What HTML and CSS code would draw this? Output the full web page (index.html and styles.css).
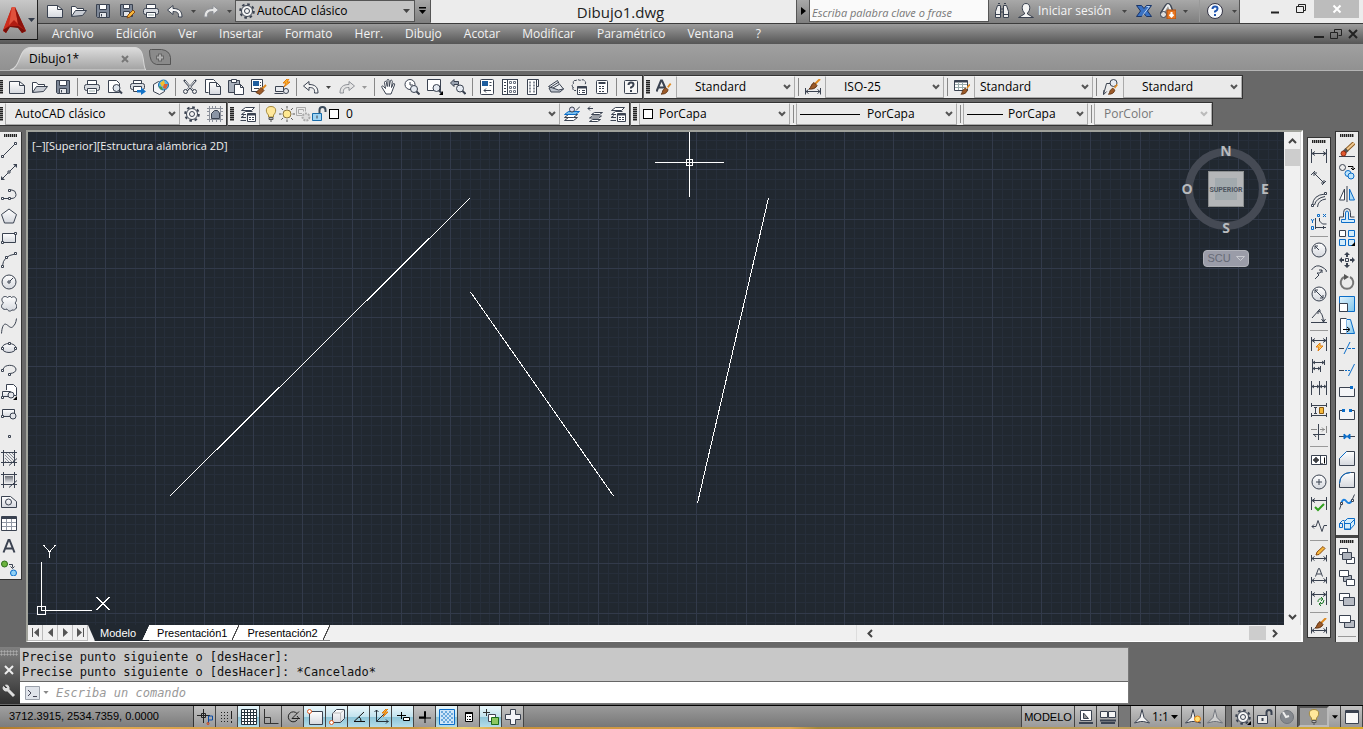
FILE: index.html
```html
<!DOCTYPE html>
<html lang="es">
<head>
<meta charset="utf-8">
<title>Dibujo1.dwg</title>
<link rel="stylesheet" href="styles.css">
</head>
<body>
<svg class="sprite" aria-hidden="true">
  <defs>
    <linearGradient id="g-page" x1="0" y1="0" x2="0" y2="1"><stop offset="0" stop-color="#fff"/><stop offset="1" stop-color="#d5d8de"/></linearGradient>
    <linearGradient id="g-blue" x1="0" y1="0" x2="1" y2="1"><stop offset="0" stop-color="#e4f4fd"/><stop offset="1" stop-color="#7fc4ea"/></linearGradient>
    <linearGradient id="g-dark" x1="0" y1="0" x2="0" y2="1"><stop offset="0" stop-color="#6c7078"/><stop offset="1" stop-color="#e8e9ec"/></linearGradient>
    <linearGradient id="g-tab" x1="0" y1="0" x2="0" y2="1"><stop offset="0" stop-color="#dcdcdc"/><stop offset="1" stop-color="#a2a2a2"/></linearGradient>
  </defs>
  <symbol id="brush" viewBox="0 0 16 16"><path d="M14.500 3l-4 5" stroke="#e08a20" stroke-width="2"/><path d="M11 7l-2 2" stroke="#eee" stroke-width="2"/><path d="M9 7.500l2.500 2.500c-1 4-4 5-8 5 2-1 1-3 2.500-5z" fill="#9c5a28" stroke="#5f3212"/></symbol>
  <symbol id="caret" viewBox="0 0 7 4"><path d="M0 0h7l-3.500 4z" fill="currentColor" stroke="none"/></symbol>
  <symbol id="new" viewBox="0 0 16 16"><path d="M.5 2.500h10l5 4v8h-15z" fill="url(#g-page)"/><path d="M10.500 2.500v4h5"/></symbol>
  <symbol id="open" viewBox="0 0 16 16"><path d="M.5 13.500v-10h4l1.500 2h6.500v2" fill="#fff"/><path d="M.5 13.500l4-6h11l-4 5z" fill="#c9cdd4"/></symbol>
  <symbol id="save" viewBox="0 0 16 16"><path d="M1.500 1.500h13v13h-12l-1-1z" fill="#7d8797"/><path d="M4.500 1.500h7v5h-7z" fill="#fff"/><path d="M4.500 9.500h7v5h-7z" fill="#e4e6ea"/><path d="M6.500 11v2.500"/></symbol>
  <symbol id="saveas" viewBox="0 0 16 16"><path d="M1.500 1.500h12v12h-11l-1-1z" fill="#7d8797"/><path d="M4.500 1.500h6v4h-6z" fill="#fff"/><path d="M4.500 8.500h6v5h-6z" fill="#e4e6ea"/><path d="M8 15l1-3 5-5 2 2-5 5z" fill="#f6b73c" stroke="#8a4a10"/></symbol>
  <symbol id="print" viewBox="0 0 16 16"><path d="M3.500 5.500v-4h9v4" fill="#fff"/><rect x="0.500" y="5.500" width="15" height="6" rx="2" fill="#d9dce1"/><path d="M3.500 9.500h9v5h-9z" fill="#fff"/><path d="M5 12h6" stroke="#9aa"/></symbol>
  <symbol id="preview" viewBox="0 0 16 16"><path d="M1.500 1.500h8l3 3v9h-11z" fill="#fff"/><circle cx="9.500" cy="9" r="3.500" fill="#dfe6ee"/><path d="M12 11.500l3 3" stroke-width="2"/></symbol>
  <symbol id="publish" viewBox="0 0 16 16"><path d="M3.500 4.500v-3h8v3" fill="#fff"/><rect x="0.500" y="4.500" width="14" height="6" rx="2" fill="#d9dce1"/><path d="M3.500 7.500h8v5h-8z" fill="#fff"/><path d="M7 11h4V8.500l5 4-5 3.500V13.500H7z" fill="#1473c8" stroke="none"/></symbol>
  <symbol id="globe" viewBox="0 0 16 16"><path d="M.5 5.500l5-3 6 3v7l-5 3-6-3z" fill="#f4f5f7"/><circle cx="10.500" cy="6" r="5" fill="#5bb4e6" stroke="#1d6ea8"/><path d="M7 4l4-3 1 4-3 3z" fill="#f0c030" stroke="none"/><path d="M11 5l4 0-2 5-3-1z" fill="#e06030" stroke="none"/><path d="M6 7l3 1 1 3-3-1z" fill="#4aa040" stroke="none"/></symbol>
  <symbol id="cut" viewBox="0 0 16 16"><path d="M2 1l9 10.500M14 1L5 11.500" stroke-width="2"/><path d="M3 2l8 9M13 2l-8 9" stroke="#eee"/><circle cx="3.500" cy="12.500" r="2"/><circle cx="12.500" cy="12.500" r="2"/></symbol>
  <symbol id="copy" viewBox="0 0 16 16"><path d="M3.500 13.500h-3v-13h8l2 2" fill="#fff"/><path d="M4.500 3.500h7l4 4v8h-11z" fill="url(#g-page)"/><path d="M11.500 3.500v4h4"/></symbol>
  <symbol id="paste" viewBox="0 0 16 16"><path d="M0.500 1.500h11v12h-11z" fill="#a9b0bb"/><path d="M3.500 0.500h5v3h-5z" fill="#fff"/><path d="M6.500 5.500h6l3 3v7h-9z" fill="#fff"/><path d="M12.500 5.500v3h3"/></symbol>
  <symbol id="match" viewBox="0 0 16 16"><path d="M.5 0.500h11v12h-11z" fill="#fff"/><path d="M2 2h6v5h-6z" fill="#1f5e9e" stroke="none"/><path d="M3 9.500h5M9.500 3v1M9.500 6v1"/><path d="M15 6l-4 4" stroke="#e08a20" stroke-width="2"/><path d="M10 8.500l3 3-4 4-4-2z" fill="#9c5a28" stroke="#6a3a14"/></symbol>
  <symbol id="bedit" viewBox="0 0 16 16"><path d="M1.500 7.500h8v5h-8z" fill="#e8eaee"/><circle cx="12" cy="12" r="2.500" fill="#e8eaee"/><path d="M0.500 14.500h9"/><path d="M13 0l-4 4h3l-2 4 6-5h-3l2-3z" fill="#ffb428" stroke="#e07a10"/></symbol>
  <symbol id="undo" viewBox="0 0 16 16"><path d="M6 2.500l-5.500 4.500 5.500 4.500v-3c4 0 6 1 5.500 5.500h3.500c0-6-3-8.500-9-8.500z" fill="#f4f4f4"/></symbol>
  <symbol id="redo" viewBox="0 0 16 16"><path d="M10 2.500l5.500 4.500-5.500 4.500v-3c-4 0-6 1-5.500 5.500h-3.500c0-6 3-8.500 9-8.500z" fill="#e4e4e4" stroke="#8d9096"/></symbol>
  <symbol id="pan" viewBox="0 0 16 16"><path d="M5 15l-4-6.500c-1-2 1-2 2-.5l1.500 1.500-1-6c0-1.500 1.500-1.500 2 0l.8 4-.3-6c.2-1.500 2-1.500 2 0l.3 6 1-5.500c.5-1.500 2-1 2 .5l-.8 6 1.500-3.500c1-1 2-.5 1.500 1l-2.500 6.500-1 2.500z" fill="#fff"/></symbol>
  <symbol id="zoom" viewBox="0 0 16 16"><circle cx="6" cy="5.500" r="5" fill="#fff"/><path d="M6 3v3h3"/><circle cx="10" cy="10" r="3.500" fill="#e6ebf2"/><path d="M12.500 12.500l3 3" stroke-width="2"/></symbol>
  <symbol id="zoomw" viewBox="0 0 16 16"><path d="M0.500 0.500h13v11h-13z" fill="#fff"/><circle cx="9.500" cy="9" r="3.500" fill="#e6ebf2"/><path d="M12 11.500l2.500 2.500" stroke-width="2"/><path d="M16 12v4h-4z" fill="#000" stroke="none"/></symbol>
  <symbol id="zoomp" viewBox="0 0 16 16"><path d="M4 .5L0.500 4 4 7.500V5.500h4.500V2.500H4z" fill="#9aa3b0"/><circle cx="10" cy="9.500" r="3.500" fill="#e6ebf2"/><path d="M12.500 12l3 3" stroke-width="2"/></symbol>
  <symbol id="props" viewBox="0 0 16 16"><rect x="1.500" y="0.500" width="13" height="15" rx="1" fill="#fff"/><path d="M3 2h6v5h-6z" fill="#1f5e9e" stroke="none"/><path d="M10.500 3.500h2M10.500 6.500h2M5 11.500h7M7 9.500l-2 2 2 2"/></symbol>
  <symbol id="dcenter" viewBox="0 0 16 16"><rect x="0.500" y="0.500" width="15" height="15" fill="#fff"/><path d="M5.500 0.500v15M2 3.500h2M2 6.500h2M2 9.500h2M2 12.500h2"/><path d="M7.500 2.500h2v2h-2zM11.500 2.500h2v2h-2zM7.500 7.500h2v2h-2zM11.500 7.500h2v2h-2zM7.500 11.500h2v2h-2zM11.500 11.500h2v2h-2z" stroke="#6a7280"/></symbol>
  <symbol id="palette" viewBox="0 0 16 16"><path d="M2.500 0.500h11v7h-2v8h-9z" fill="#fff"/><path d="M11.500 0.500v7"/><path d="M4 3.500h2M8 3.500h2M4 6.500h2M8 6.500h2M4 9.500h2M8 9.500h2M4 12.500h2M8 12.500h2" stroke="#8a909a" stroke-width="2"/></symbol>
  <symbol id="sheet" viewBox="0 0 16 16"><path d="M1 9l2 4h9l3.500-3-11-2z" fill="#bfc5ce"/><path d="M0.500 7.500l9-6 1.500 3 4.500 5.500-5 1z" fill="#eef0f3"/><path d="M3 8l7-4.500M5 9l6-3.500"/></symbol>
  <symbol id="markup" viewBox="0 0 16 16"><path d="M2.500 8.500q-3-2 0-4-1-3.500 2.500-3 2.500-1.500 4 0 3-1.500 4.500 0 2 2 .5 4M2 8q-1 4 3 3.500" stroke-dasharray="3 1"/><path d="M6.500 7.500h9v8h-9z" fill="#fff"/><path d="M6.500 8.500h9" stroke-width="2"/><path d="M8 11.500h1M11 11.500h3M8 13.500h1M11 13.500h3"/></symbol>
  <symbol id="calc" viewBox="0 0 16 16"><rect x="2.500" y="1.500" width="11" height="13" rx="1" fill="#fff"/><path d="M4.500 4h7" stroke-width="2"/><path d="M5 7.500h6M5 9.500h6M5 12.500h6" stroke-dasharray="2 1"/></symbol>
  <symbol id="help" viewBox="0 0 16 16"><rect x="1.500" y="1.500" width="13" height="13" rx="1" fill="#f7f7f7"/><path d="M5.500 6q0-2.500 2.500-2.500t2.500 2.200q0 1.500-2.500 2.800v1M8 11v2" stroke-width="2"/></symbol>
  <symbol id="textstyle" viewBox="0 0 16 16"><path d="M0.500 12.500L5 1.500h1l4 9M2.500 8.500h5.500" stroke-width="2"/><use href="#brush" x="2" y="2" width="14" height="14"/></symbol>
  <symbol id="dimstyle" viewBox="0 0 16 16"><path d="M0.500 9v6.500M15.500 9v6.500M0.500 12.500h15M3.500 10.500l-2.500 2 2.500 2M12.500 10.500l2.500 2-2.500 2"/><path d="M15 0l-5 5" stroke="#e08a20" stroke-width="2"/><path d="M9 3.500l3 3c-1 3-5 4-8 3.500 2-1 2-5 5-6.500z" fill="#9c5a28" stroke="#5f3212"/></symbol>
  <symbol id="tblstyle" viewBox="0 0 16 16"><path d="M0.500 1.500h13v10h-13z" fill="#fff"/><path d="M0.500 2.500h13" stroke-width="2"/><path d="M1 5.500h12M1 8.500h12M4.500 3v8M8.500 3v8" stroke="#9aa"/><use href="#brush" x="4" y="3" width="13" height="13"/></symbol>
  <symbol id="ldrstyle" viewBox="0 0 16 16"><path d="M0.500 15.500l3-11h4M0 11l.7 4.500 3-3"/><circle cx="10.500" cy="4" r="3.500" fill="#e6ebf2"/><use href="#brush" x="2" y="3" width="14" height="13"/></symbol>
  <symbol id="gear" viewBox="0 0 16 16"><circle cx="8" cy="8" r="6.800" stroke-width="2" stroke-dasharray="2.600 2.740"/><circle cx="8" cy="8" r="5.500" fill="#f4f4f4"/><circle cx="8" cy="8" r="2.500"/></symbol>
  <symbol id="wsave" viewBox="0 0 16 16"><path d="M2.500 0v16M13.500 0v16M0 2.500h16M0 13.500h16M5.500 0v2M8.500 0v2M0 5.500h2M0 9.500h2M14 5.500h2M14 9.500h2M5.500 14v2M9.500 14v2" stroke="#8b909a"/><path d="M4.500 12.500v-5l3-3h3l2 2.500v5.500z" fill="#8b95a5"/></symbol>
  <symbol id="layers" viewBox="0 0 16 16"><path d="M1.500 4.500l4-3h9l-3 3zM6 8.500h-4.500l4-3h7M6 11.500h-5l3-2M0.500 14.500h5.500" fill="#fff"/><path d="M7.500 7.500h8v8h-8z" fill="#fff"/><path d="M7.500 8.500h8" stroke-width="2"/><path d="M9 11.500h2M12 11.500h2M9 13.500h2M12 13.500h2"/></symbol>
  <symbol id="bulb" viewBox="0 0 16 16"><path d="M8 0.500c6 0 5.500 6 2.500 8.500v2h-5v-2C2.500 6.500 2 .5 8 .5z" fill="#ffe79a" stroke="#a58a3a"/><path d="M6 11.500h4v2h-4zM7 15h2" stroke="#555" fill="#bbb"/></symbol>
  <symbol id="sun" viewBox="0 0 16 16"><circle cx="8" cy="8" r="4" fill="#ffe890" stroke="#8a7440"/><path d="M8 0v2.500M8 13.500v2.500M0 8h2.500M13.500 8h2.500M2.300 2.300l1.800 1.800M12 12l1.800 1.800M2.300 13.700l1.800-1.800M12 4l1.800-1.800" stroke="#555"/></symbol>
  <symbol id="vpfreeze" viewBox="0 0 16 16"><path d="M7 9.500h-5.500v-8h9v4M7 7.500h-3.500v-4h5v2" stroke="#aaa"/><circle cx="11" cy="11" r="3.500" fill="#ddd" stroke="#aaa" stroke-width="2" stroke-dasharray="2 1"/></symbol>
  <symbol id="lock" viewBox="0 0 16 16"><path d="M8.500 7V4q0-3 3-3t3 3v2" stroke="#3a4a5a" stroke-width="2"/><path d="M1.500 7.500h9v7h-9z" fill="#9fd4f4" stroke="#176aa8"/><path d="M6 9.500v3"/></symbol>
  <symbol id="lay1" viewBox="0 0 16 16"><path d="M0.500 14.500l4-3h9l-4 3z" fill="#fff"/><path d="M.5 11.500l4-3h9l-4 3z" fill="#fff"/><path d="M0.500 8.500l4-3h11l-4 3z" fill="#78bdec" stroke="#0a6cc8"/><circle cx="8" cy="3.500" r="2.500" fill="#dde"/><path d="M12 4.500l4-4" /></symbol>
  <symbol id="lay2" viewBox="0 0 16 16"><path d="M2.500 15.500l3-2h8l-3 2zM2.500 12l3-2h9l-3 2zM4.500 8.500l3-2h8l-3 2z" fill="#fff"/><path d="M1 2.500h5M3 .5l-2 2 2 2"/></symbol>
  <symbol id="line" viewBox="0 0 16 16"><path d="M2 14L14 2"/><path d="M.5 13.500h2v2h-2zM13.500 .5h2v2h-2z" fill="#fff"/></symbol>
  <symbol id="xline" viewBox="0 0 16 16"><path d="M1 15L15 1"/><path d="M7 7h2v2h-2z" fill="#fff"/><path d="M0 16v-4l4 4zM16 0v4l-4-4z" fill="#3a4250" stroke="none"/></symbol>
  <symbol id="pline" viewBox="0 0 16 16"><path d="M2 12.500h8q5 0 5-4t-4-4.500H9"/><path d="M.5 11.500h2v2h-2zM7.500 11.500h2v2h-2zM7.500 3.500h2v2h-2z" fill="#fff"/></symbol>
  <symbol id="polygon" viewBox="0 0 16 16"><path d="M8 1l7.500 5.500-3 8.500h-9l-3-8.500z" fill="url(#g-page)"/></symbol>
  <symbol id="rect" viewBox="0 0 16 16"><path d="M1.500 3.500h13v9h-13z" fill="url(#g-page)"/><path d="M.5 11.500h2v2h-2zM13.500 2.500h2v2h-2z" fill="#fff"/></symbol>
  <symbol id="arc" viewBox="0 0 16 16"><path d="M1.500 14Q2 4 14 2"/><path d="M.5 13.500h2v2h-2zM4.500 4.500h2v2h-2zM13.500 .5h2v2h-2z" fill="#fff"/></symbol>
  <symbol id="circle" viewBox="0 0 16 16"><circle cx="8" cy="8" r="7" fill="url(#g-page)"/><path d="M8 8l4-4"/><path d="M7 7h2v2h-2z" fill="#fff"/></symbol>
  <symbol id="cloud" viewBox="0 0 16 16"><path d="M2.500 7C-1.500 3 3-1.500 6.500 1.500c2-1.500 3-1.500 4 0C14-1 17.500 3.500 14 7c3.500 3 1 8-3 7-2 2-4 1-5-1-4 2-8-3-3.500-6z" fill="url(#g-page)"/></symbol>
  <symbol id="spline" viewBox="0 0 16 16"><path d="M.5 15.500C1 8 3 5 5.500 6.500s4 4 6 2.500 3.500-4 4-8.500"/></symbol>
  <symbol id="ellipse" viewBox="0 0 16 16"><ellipse cx="8" cy="8" rx="7" ry="4.500" fill="url(#g-page)"/><path d="M.5 7.500h2v2h-2zM13.500 7.500h2v2h-2zM7.500 2.500h2v2h-2z" fill="#fff"/></symbol>
  <symbol id="earc" viewBox="0 0 16 16"><path d="M2 7.500C3 2 14 2 15 7q0 4-6 4.500"/><path d="M.5 7.500h2v2h-2zM7.500 11.500h2v2h-2z" fill="#fff"/></symbol>
  <symbol id="insert" viewBox="0 0 16 16"><path d="M5.500 6v-5.500h7l3 3v8h-4" fill="#fff"/><path d="M1.500 7.500h8v5h-8z" fill="url(#g-page)"/><circle cx="10" cy="11" r="3" fill="#e4e6ea"/><path d="M.5 12.500h2v2h-2z" fill="#fff"/><path d="M16 12v4h-4z" fill="#000" stroke="none"/></symbol>
  <symbol id="block" viewBox="0 0 16 16"><path d="M1.500 3.500h12v7h-12z" fill="url(#g-page)"/><circle cx="12" cy="10" r="3" fill="#e4e6ea"/><path d="M.5 9.500h2v2h-2z" fill="#fff"/></symbol>
  <symbol id="point" viewBox="0 0 16 16"><path d="M7.500 7.500h2v2h-2z"/></symbol>
  <symbol id="hatch" viewBox="0 0 16 16"><path d="M4 5l7 7M4 8l4 4M5 3l8 8M8 3l5 5M4 11l1 1M11 3l2 2" stroke="#8a909a"/><path d="M0 2.500h16M0 12.500h16M2.500 0v16M13.500 0v16M8 15.500l8-7"/></symbol>
  <symbol id="gradient" viewBox="0 0 16 16"><path d="M4 4h8v7h-8z" fill="url(#g-dark)" stroke="none"/><path d="M0 2.500h16M0 12.500h16M2.500 0v16M13.500 0v16M8 15.500l8-7"/></symbol>
  <symbol id="region" viewBox="0 0 16 16"><path d="M.5 2.500h9l6 5v6h-15z" fill="url(#g-page)"/><circle cx="7.500" cy="8" r="3"/></symbol>
  <symbol id="table" viewBox="0 0 16 16"><path d="M.5 .5h15v14h-15z" fill="#fff"/><path d="M1 2h14" stroke-width="2"/><path d="M1 6.500h14M1 10.500h14M5.500 3v11M10.500 3v11" stroke="#9299a5"/></symbol>
  <symbol id="mtext" viewBox="0 0 16 16"><path d="M2.500 14.500L7.500 2h1l5 12.500M4.500 10.500h7" stroke-width="2"/></symbol>
  <symbol id="addsel" viewBox="0 0 16 16"><circle cx="3.500" cy="4" r="3" fill="#6cb33e" stroke="#2c6e1a"/><circle cx="12.500" cy="13" r="3" fill="#8fd0f5" stroke="#0a6cc8"/><path d="M8 4.500h3.500v3M9.500 6.500l2 2 2-2"/></symbol>
  <symbol id="dlin" viewBox="0 0 16 16"><path d="M.5 1v14M15.500 1v14M1 5.500h14M4 3.500l-3 2 3 2M12 3.500l3 2-3 2"/></symbol>
  <symbol id="dali" viewBox="0 0 16 16"><path d="M0 5l4-4M11 15l4-4M3 3l10 10M3 6V3h3M13 10v3h-3"/></symbol>
  <symbol id="darc" viewBox="0 0 16 16"><path d="M1.500 13Q2 3 14 2M6.500 15Q7 8 15 7M3.500 13Q5 6 14 4.500" /><path d="M.5 12.500h2v2h-2zM13.500 .5h2v2h-2z" fill="#fff"/></symbol>
  <symbol id="dord" viewBox="0 0 16 16"><path d="M4.500 4v11M8.500 4v3l3 3h4M4 13.500h11M12.500 12v3"/><path d="M0 5l1.500 2L3 5M1.500 7v2M.5 12.500h2v3h-2zM6.500 .5h2v2h-2zM12 0l3 3M15 0l-3 3" stroke="#0a6cc8"/></symbol>
  <symbol id="drad" viewBox="0 0 16 16"><circle cx="8" cy="8" r="7" fill="url(#g-page)"/><path d="M8 8L4 4M4 7V4h3"/></symbol>
  <symbol id="djog" viewBox="0 0 16 16"><path d="M.5 6Q5-.5 11 3t4 5M4 15l4-4-2-2h3l2-3M8 6h3v3"/></symbol>
  <symbol id="ddia" viewBox="0 0 16 16"><circle cx="8" cy="8" r="7" fill="url(#g-page)"/><path d="M4 4l8 8M4 7V4h3M12 9v3h-3"/></symbol>
  <symbol id="dang" viewBox="0 0 16 16"><path d="M0 14.500h16M1 10l8-9M7.500 3Q12 5 12.500 14M7 6V3h3M10.500 11l2 3 2-3"/></symbol>
  <symbol id="dquick" viewBox="0 0 16 16"><path d="M.5 1v14M15.500 1v14M1 4.500h14M4 2.500l-3 2 3 2M12 2.500l3 2-3 2"/><path d="M9 7l-4 4h3l-1 4 5-5H9z" fill="#ffd060" stroke="#e07a10"/></symbol>
  <symbol id="dbase" viewBox="0 0 16 16"><path d="M1.500 1v14M13.500 2v5M9.500 8v6M2 4.500h11M2 10.500h7M4 3l-2 1.500 2 1.500M11 3l2 1.500-2 1.500M4 9l-2 1.500 2 1.500M7 9l2 1.500-2 1.500"/></symbol>
  <symbol id="dcont" viewBox="0 0 16 16"><path d="M.5 1v14M8.500 1v14M15.500 1v14M1 6.500h14M3 5L1 6.500 3 8M6 5l2 1.500L6 8M11 5L9 6.500 11 8M13 5l2 1.500L13 8"/></symbol>
  <symbol id="dspace" viewBox="0 0 16 16"><path d="M.5 1v4M15.500 1v4M1 3.500h14M.5 11v4M15.500 11v4M1 13.500h14M4.500 5v7M3 5.500h3M3 11.500h3"/><path d="M8.500 5.500h4v6h-4z" fill="#f5b83a" stroke="#8a5a10"/></symbol>
  <symbol id="dbreak" viewBox="0 0 16 16"><path d="M7.500 0v16M2 10.500h12M5 13l-2-2.500"/><path d="M0 5.500h6M9 5.500h5M11 3.500l2 2-2 2M15.500 2v7" stroke="#888"/></symbol>
  <symbol id="tol" viewBox="0 0 16 16"><path d="M.5 3.500h15v9h-15zM9.500 3.500v9" fill="#fff"/><circle cx="5" cy="8" r="2"/><path d="M5 5v6M2 8h6M11 11v1M13.500 5.500v6" stroke="#000"/></symbol>
  <symbol id="cmark" viewBox="0 0 16 16"><circle cx="8" cy="8" r="7" fill="url(#g-page)"/><path d="M8 5v6M5 8h6"/></symbol>
  <symbol id="inspect" viewBox="0 0 16 16"><path d="M.5 1v13M15.500 1v13M1 4.500h14M4 2.500l-3 2 3 2"/><path d="M4 11l3 3 6-6" stroke="#2fa01e" stroke-width="2"/></symbol>
  <symbol id="jogl" viewBox="0 0 16 16"><path d="M1 8.500h4l2-6 4 11 2-6h3M3 6.500l-2 2 2 2"/></symbol>
  <symbol id="dedit" viewBox="0 0 16 16"><path d="M.5 9v6.500M15.500 9v6.500M1 12.500h14M3.500 10.500L1 12.500l2.500 2M12.500 10.500l2.500 2-2.500 2"/><path d="M5 9l1-3 6-5.500 2 2-6 6z" fill="#f6b73c" stroke="#8a4a10"/></symbol>
  <symbol id="dtedit" viewBox="0 0 16 16"><path d="M.5 9v6.500M15.500 9v6.500M1 12.500h14M3.500 10.500L1 12.500l2.500 2M12.500 10.500l2.500 2-2.500 2"/><path d="M4.500 8.500l3-8h1l3 8M6 6h4"/></symbol>
  <symbol id="dupd" viewBox="0 0 16 16"><path d="M.5 1v14M15.500 1v14M1 4.500h14M4 2.500l-3 2 3 2M12 2.500l3 2-3 2"/><path d="M7 12q0-4 4-3M13 10q0 4-4 4M10 7l2 2-2 2M10 12l-2 2 2 2" stroke="#1f7a2a"/></symbol>
  <symbol id="erase" viewBox="0 0 16 16"><path d="M0 14.500h16"/><path d="M15 1L7 8.500" stroke="#8a5a20" stroke-width="4"/><path d="M15 1L8 7.500" stroke="#f0c890" stroke-width="2"/><path d="M8 7.500l-3 3" stroke="#555" stroke-width="4"/><circle cx="4.500" cy="11.500" r="2.500" fill="#e2572e" stroke="#8e2c10"/></symbol>
  <symbol id="cpy" viewBox="0 0 16 16"><circle cx="3.500" cy="3.500" r="3"/><path d="M9 2.500h5v3M12 4l2 2 2-2" stroke="#000"/><circle cx="9" cy="9.500" r="3" fill="#bfe4fa" stroke="#0a6cc8"/><circle cx="12" cy="12" r="3" fill="#bfe4fa" stroke="#0a6cc8"/></symbol>
  <symbol id="mirror" viewBox="0 0 16 16"><path d="M5.500 3v11h-5z" fill="#fff"/><path d="M8 0v16"/><path d="M10.500 3v11h5z" fill="#aedcf7" stroke="#0a6cc8"/></symbol>
  <symbol id="offset" viewBox="0 0 16 16"><path d="M.5 12.500v-3.500h4V4.500q0-4 3.500-4t3.500 4V9h4"/><path d="M2.500 12.500v-1h4V5q0-2 1.500-2T9.500 5v6.500h6v3h-13z" stroke="#0a6cc8" fill="#d3ecfb"/></symbol>
  <symbol id="array" viewBox="0 0 16 16"><path d="M.5 .5h6v6h-6z" fill="#fff"/><path d="M9.500 .5h6v6h-6zM.5 9.500h6v6h-6zM9.500 9.500h6v6h-6z" fill="#d3ecfb" stroke="#0a6cc8"/><path d="M16 12v4h-4z" fill="#000" stroke="none"/></symbol>
  <symbol id="move" viewBox="0 0 16 16"><path d="M6.500 6.500h3v3h-3z"/><path d="M8 0l3 3H9v2H7V3H5zM8 16l3-3H9v-2H7v2H5zM0 8l3-3v2h2v2H3v2zM16 8l-3-3v2h-2v2h2v2z" fill="#3a4250" stroke="none"/></symbol>
  <symbol id="rotate" viewBox="0 0 16 16"><path d="M5 3a6.300 6.300 0 1 0 6 0" stroke="#777" stroke-width="2"/><path d="M5 0l5 3-5 3z" fill="#555" stroke="none"/></symbol>
  <symbol id="scale" viewBox="0 0 16 16"><path d="M.5 .5h15v15h-15z" fill="url(#g-blue)" stroke="#0a6cc8"/><path d="M.5 7.500h8v8h-8z" fill="#fff"/></symbol>
  <symbol id="stretch" viewBox="0 0 16 16"><path d="M7.500 1.500h4l4 14h-8z" fill="url(#g-blue)" stroke="#0a6cc8"/><path d="M7.500 .5h-6v15h6" fill="#fff"/><path d="M4 11.500h6M8 9l3 2.500-3 2.500" stroke="#000"/></symbol>
  <symbol id="trim" viewBox="0 0 16 16"><path d="M0 8.500h5"/><path d="M5 14l6-12" stroke="#0a6cc8"/><path d="M9 8.500h7" stroke="#0a6cc8" stroke-dasharray="3 1"/></symbol>
  <symbol id="extend" viewBox="0 0 16 16"><path d="M0 8.500h5"/><path d="M6 8.500h5" stroke="#0a6cc8" stroke-dasharray="2 1"/><path d="M9.500 14l6-12" stroke="#0a6cc8"/></symbol>
  <symbol id="brkpt" viewBox="0 0 16 16"><path d="M12 3.500h-11.500v9h15v-8" fill="#f4f5f7"/><path d="M11 2h3v3h-3z" fill="#0a6cc8" stroke="none"/></symbol>
  <symbol id="brk" viewBox="0 0 16 16"><path d="M3 4.500h-2.500v9h15v-9h-3" fill="#f4f5f7"/><path d="M3 3h3v3h-3zM10 3h3v3h-3z" fill="#0a6cc8" stroke="none"/></symbol>
  <symbol id="join" viewBox="0 0 16 16"><path d="M0 8.500h5M11 8.500h5"/><path d="M5 6l3 2.500L5 11zM11 6L8 8.500l3 2.500z" fill="#0a6cc8"  stroke="#0a6cc8"/></symbol>
  <symbol id="chamfer" viewBox="0 0 16 16"><path d="M.5 15.500v-7l7-7h8v14z" fill="url(#g-page)"/><path d="M.5 8.500l7-7" stroke="#0a6cc8"/></symbol>
  <symbol id="fillet" viewBox="0 0 16 16"><path d="M.5 15.500v-4Q1 1 11.500 .5h4v15z" fill="url(#g-page)"/><path d="M.5 11.500Q1 1 11.500 .5" stroke="#0a6cc8"/></symbol>
  <symbol id="blend" viewBox="0 0 16 16"><path d="M.5 15.500l2-6M13.500 5l2-4.500"/><path d="M2.500 8.500q2-5 5-1t6-2" stroke="#1a80e0" stroke-width="2"/><path d="M1.500 8.500h2v2h-2zM12.500 5.500h2v2h-2z" fill="#fff"/></symbol>
  <symbol id="explode" viewBox="0 0 16 16"><path d="M5.500 5.500l3-3h7v6l-4 4.500h-6z" fill="#d3ecfb" stroke="#0a6cc8"/><path d="M5.500 7.500h6v6h-6zM11.500 7.500l4-4M.5 7.500l3-3h2M.5 7.500v4h3M.5 7.500h3v4" stroke="#0a6cc8"/></symbol>
  <symbol id="front1" viewBox="0 0 16 16"><path d="M.5 .5h8v6h-8zM7.500 9.500h8v6h-8z" fill="#fff"/><path d="M3.500 4.500h9v7h-9z" fill="#aeb3bc"/></symbol>
  <symbol id="front2" viewBox="0 0 16 16"><path d="M4.500 5.500h8v6h-8z" fill="#aeb3bc"/><path d="M.5 .5h9v6h-9zM7.500 9.500h8v6h-8z" fill="#fff"/></symbol>
  <symbol id="front3" viewBox="0 0 16 16"><path d="M.5 1.500h10v7h-10z" fill="#fff"/><path d="M4.500 5.500h11v8h-11z" fill="#b7bbc3"/></symbol>
  <symbol id="front4" viewBox="0 0 16 16"><path d="M5.500 6.500h10v7h-10z" fill="#b7bbc3"/><path d="M.5 1.500h11v7h-11z" fill="#fff"/></symbol>
  <symbol id="s-infer" viewBox="0 0 16 16"><path d="M6.500 0v14M0 6.500h13M4.500 4.500h4v4h-4z" stroke="#222"/><path d="M11.500 14v-7h4v4h-4" stroke="#0a4ca8"/><circle cx="11" cy="14.500" r="1" stroke="#d04010"/></symbol>
  <symbol id="s-snap" viewBox="0 0 16 16"><path d="M2 3.500h9M2 6.500h9M2 9.500h9M2 12.500h9" stroke="#222" stroke-dasharray="1 2"/><path d="M12.500 2v8M12.500 12v2" stroke="#222"/></symbol>
  <symbol id="s-grid" viewBox="0 0 16 16"><path d="M.5 .5h15v15h-15zM3.500 0v16M6.500 0v16M9.500 0v16M12.500 0v16M0 3.500h16M0 6.500h16M0 9.500h16M0 12.500h16" fill="#fff" stroke="#26333c"/></symbol>
  <symbol id="s-ortho" viewBox="0 0 16 16"><path d="M1.500 0v14.500h14M1.500 8.500h6v6" stroke="#333"/></symbol>
  <symbol id="s-polar" viewBox="0 0 16 16"><path d="M12 4.500a5 5 0 1 0 .5 6M7 9.500L14 2.500M7 9.500h8M12 7l2 2.500" stroke="#222"/></symbol>
  <symbol id="s-osnap" viewBox="0 0 16 16"><path d="M2.500 2.500h13v13h-13z" fill="url(#g-page)"/><circle cx="2.500" cy="2.500" r="2" fill="#fff" stroke="#e05a20"/></symbol>
  <symbol id="s-3d" viewBox="0 0 16 16"><path d="M3.500 4.500l4-4h8v9l-4 4h-8z" fill="url(#g-page)"/><path d="M11.500 13v-9h-8M11.500 4l4-3.500" stroke="#bbb"/><circle cx="2.500" cy="13.500" r="2" fill="#fff" stroke="#e05a20"/></symbol>
  <symbol id="s-track" viewBox="0 0 16 16"><path d="M13 3L3 12.500h11M8 8q2 1 2 4" stroke="#111"/></symbol>
  <symbol id="s-ducs" viewBox="0 0 16 16"><path d="M3.500 1v11.500h12M3.500 12.500l8-8M1.500 3l2-2 2 2M13 10.500l2 2-2 2" stroke="#26333c"/><path d="M13 0l-4 4h3l-2 4 5-5h-3l3-3z" fill="#ffb428" stroke="#e07a10"/></symbol>
  <symbol id="s-dyn" viewBox="0 0 16 16"><path d="M2 6.500h9M6.500 3v7" stroke="#000"/><path d="M8.500 8.500h6v3h-6z" fill="#fff" stroke="#000"/></symbol>
  <symbol id="s-lwt" viewBox="0 0 16 16"><path d="M2 9h12M8 2v12" stroke="#000"/><path d="M2 8.500h6v-6" stroke="#000" stroke-width="2"/></symbol>
  <symbol id="s-tpy" viewBox="0 0 16 16"><path d="M.5 .5h15v15h-15z" fill="#cfe6f8" stroke="#0a6cc8"/><path d="M2 3h12M2 7h12M2 11h12" stroke="#6aa9dc" stroke-width="2" stroke-dasharray="2 2"/><path d="M4 5h10M4 9h10M4 13h10" stroke="#6aa9dc" stroke-width="2" stroke-dasharray="2 2"/></symbol>
  <symbol id="s-qp" viewBox="0 0 16 16"><path d="M4.500 3.500h7v9h-7z" fill="#fff" stroke="#000"/><path d="M4.500 4h7" stroke="#000" stroke-width="2"/><path d="M6 7.500h1M8 7.500h2M6 10.500h1M8 10.500h2" stroke="#000"/></symbol>
  <symbol id="s-sc" viewBox="0 0 16 16"><path d="M3.500 0v7M0 3.500h7" stroke="#333"/><path d="M5.500 5.500h7v7h-7z" fill="#fff" stroke="#445"/><path d="M8.500 8.500h7v7h-7z" fill="#8cc860" stroke="#1c6e1a"/></symbol>
  <symbol id="s-am" viewBox="0 0 16 16"><path d="M5.500 .5h5v5h5v5h-5v5h-5v-5h-5v-5h5z" fill="#f4f4f8"/></symbol>
  <symbol id="s-layout" viewBox="0 0 16 16"><path d="M2.500 1.500h11v10h-11z" fill="#fff"/><path d="M5.500 4v5.500h5z" fill="#999"/><path d="M1 14h14" stroke-width="2"/></symbol>
  <symbol id="s-views" viewBox="0 0 16 16"><path d="M.5 2.500h7v6h-7zM8.500 2.500h7v6h-7z" fill="#f4f4f4"/><path d="M0 11.500h16M1 14h14" stroke-width="2"/></symbol>
  <symbol id="s-anno" viewBox="0 0 16 16"><path d="M8 .5l2 8 5.500 5.500-6-1.500h-3l-6 1.500L6 8.500z" fill="#f4f4f4"/></symbol>
  <symbol id="s-win" viewBox="0 0 16 16"><path d="M1.500 1.500h13v13h-13z" fill="#f8f8f8"/><path d="M2 3h12" stroke-width="2"/></symbol>
  <symbol id="bino" viewBox="0 0 16 16"><path d="M1.500 14.500v-6l2-6h3v12zM14.500 14.500v-6l-2-6h-3v12z" fill="#eee"/><path d="M6.500 6h3M6.500 9h3M2 11.500h4M10 11.500h4M4 .5h2M10 .5h2"/></symbol>
  <symbol id="user" viewBox="0 0 16 16"><path d="M8 .5c5 0 4.500 7 1.500 9.500v1l6 3.500h-15l6-3.500v-1C3.500 7.500 3 .5 8 .5z" fill="#f4f4f4"/></symbol>
  <symbol id="exch" viewBox="0 0 16 16"><path d="M.5 2.500h5l2.500 3 2.500-3h5l-4 5.500 4 5.500h-5l-2.500-3-2.500 3h-5l4-5.500z" fill="#3a72c4" stroke="#1a3466"/><path d="M10.500 3.500h3l-7 9" stroke="#b8d4f4"/></symbol>
  <symbol id="a360" viewBox="0 0 16 16"><path d="M1 11L6 3q2-3 4 0l2 5" stroke="#3a4250" stroke-width="3"/><path d="M2 11L7 3q1-2 2 0l2 5" stroke="#f0f0f0" stroke-width="2"/><circle cx="3.500" cy="11.500" r="3" fill="#ddd"/><path d="M7 7h9v9h-9z" fill="#e87722" stroke="#b04f0c"/><path d="M11.500 9v3M9.500 11.500l2 2 2-2" stroke="#fff" stroke-width="2"/></symbol>
  <symbol id="helpr" viewBox="0 0 16 16"><circle cx="8" cy="8" r="7.500" fill="#f7f9fc" stroke="#334"/><path d="M5.500 6q0-2.500 2.500-2.500t2.500 2.200q0 1.500-2.500 2.800v1M8 11v2" stroke="#1f55b0" stroke-width="2"/></symbol>
</svg>

<header class="head">
  <button class="appbtn" aria-label="Menú de la aplicación">
    <svg width="24" height="28" viewBox="0 0 24 28"><path d="M10 1h3l11 24-4 2-4-6-8-1-4 7-3-2z" fill="#b01c12"/><path d="M10 1L1 24l7-5 4-8z" fill="#cc2c1c"/><path d="M10 1h3l3 17-4-4-5 5z" fill="#e0513c"/><path d="M13 1l11 24-8-7z" fill="#8c120c"/><path d="M1 24l7-4 8 0 8 5-4 2-4-5-8-1-4 6z" fill="#7a0e08"/></svg>
    <svg class="car"><use href="#caret"/></svg>
  </button>
  <div class="title">
    <div class="qat">
      <button class="q" aria-label="Nuevo"><svg class="ic"><use href="#new"/></svg></button>
      <button class="q" aria-label="Abrir"><svg class="ic"><use href="#open"/></svg></button>
      <button class="q" aria-label="Guardar"><svg class="ic"><use href="#save"/></svg></button>
      <button class="q" aria-label="Guardar como"><svg class="ic"><use href="#saveas"/></svg></button>
      <button class="q" aria-label="Imprimir"><svg class="ic"><use href="#print"/></svg></button>
      <button class="q" aria-label="Deshacer"><svg class="ic"><use href="#undo"/></svg></button>
      <button class="dd" aria-label="Lista deshacer"><svg class="car"><use href="#caret"/></svg></button>
      <button class="q" aria-label="Rehacer"><svg class="ic"><use href="#redo"/></svg></button>
      <button class="dd" aria-label="Lista rehacer"><svg class="car"><use href="#caret"/></svg></button>
      <div class="combo qsel"><select class="sel tri" aria-label="Espacio de trabajo"><option>AutoCAD clásico</option></select><span class="over"><svg class="ic"><use href="#gear"/></svg></span></div>
      <button class="dd more" aria-label="Personalizar"><svg width="7" height="8" viewBox="0 0 7 8"><path d="M0 0h7v1.500h-7zM0 3h7l-3.500 4z" fill="#000"/></svg></button>
    </div>
    <h1 class="doc">Dibujo1.dwg</h1>
    <div class="info">
      <button class="srch" aria-label="Contraer"><svg width="5" height="8" viewBox="0 0 5 8"><path d="M0 0l5 4-5 4z" fill="#000"/></svg></button>
      <input class="find" type="text" placeholder="Escriba palabra clave o frase" aria-label="Buscar">
      <button class="q" aria-label="Buscar ahora"><svg class="ic"><use href="#bino"/></svg></button>
      <button class="login"><svg class="ic"><use href="#user"/></svg>Iniciar sesión<svg class="car"><use href="#caret"/></svg></button>
      <button class="q" aria-label="Exchange"><svg class="ic"><use href="#exch"/></svg></button>
      <button class="q" aria-label="Conexión"><svg class="ic"><use href="#a360"/></svg></button>
      <button class="dd sm" aria-label="Más"><svg class="car"><use href="#caret"/></svg></button>
      <button class="q hlp" aria-label="Ayuda"><svg class="ic"><use href="#helpr"/></svg></button>
      <button class="dd sm" aria-label="Menú de ayuda"><svg class="car"><use href="#caret"/></svg></button>
    </div>
    <div class="win">
      <button aria-label="Minimizar"><svg width="12" height="12" viewBox="0 0 12 12"><path d="M2 8.500h8v2h-8z" fill="#222"/></svg></button>
      <button aria-label="Restaurar"><svg width="12" height="12" viewBox="0 0 12 12"><path d="M3.500 3.500v-2h7v6h-2M1.500 3.500h7v6h-7z" fill="none" stroke="#222"/></svg></button>
      <button class="close" aria-label="Cerrar"><svg width="10" height="10" viewBox="0 0 10 10"><path d="M1.500 1.500l7 7M8.500 1.500l-7 7" stroke="#fff" stroke-width="2"/></svg></button>
    </div>
  </div>
  <nav class="menu">
    <button>Archivo</button><button>Edición</button><button>Ver</button><button>Insertar</button><button>Formato</button><button>Herr.</button><button>Dibujo</button><button>Acotar</button><button>Modificar</button><button>Paramétrico</button><button>Ventana</button><button>?</button>
    <span class="child">
      <button aria-label="Minimizar dibujo"><svg width="10" height="12" viewBox="0 0 10 12"><path d="M0 8h10v2h-10z" fill="#222"/></svg></button>
      <button aria-label="Restaurar dibujo"><svg width="12" height="12" viewBox="0 0 12 12"><path d="M4.500 4v-2.500h7v6h-3M.5 4.500h7v6h-7z" fill="none" stroke="#222"/></svg></button>
      <button aria-label="Cerrar dibujo"><svg width="10" height="12" viewBox="0 0 10 12"><path d="M1 2l8 8M9 2l-8 8" stroke="#222" stroke-width="2"/></svg></button>
    </span>
  </nav>
</header>

<div class="filetabs">
  <div class="ftab">
    <svg class="shape" viewBox="0 0 140 22" preserveAspectRatio="none"><path d="M0 22C12 20 8 0 22 .5h106C140 0 136 20 140 22z" fill="url(#g-tab)" stroke="#d8d8d8"/></svg>
    <div class="fcont"><button>Dibujo1*</button><button aria-label="Cerrar Dibujo1"><svg width="8" height="8" viewBox="0 0 8 8"><path d="M1 1l6 6M7 1l-6 6" stroke="#777" stroke-width="2"/></svg></button></div>
  </div>
  <button class="plus" aria-label="Nuevo dibujo"><svg width="24" height="18" viewBox="0 0 24 18"><path d="M1.500 2.500q0-1 2-1h10q8 1 9 8v7h-14q-7-1-7-14z" fill="#8a8a8a" stroke="#555"/><path d="M12 5.500v8M8 9.500h8" stroke="#666" stroke-width="4"/><path d="M12 6.500v6M9 9.500h6" stroke="#b0b0b0" stroke-width="2"/></svg></button>
</div>

<div class="bars">
  <div class="barrow">
    <div class="bar"><span class="grip edge"></span><div class="tools">
      <button class="tb" aria-label="Nuevo"><svg class="ic"><use href="#new"/></svg></button><button class="tb" aria-label="Abrir"><svg class="ic"><use href="#open"/></svg></button><button class="tb" aria-label="Guardar"><svg class="ic"><use href="#save"/></svg></button><i class="sep"></i>
      <button class="tb" aria-label="Imprimir"><svg class="ic"><use href="#print"/></svg></button><button class="tb" aria-label="Vista preliminar"><svg class="ic"><use href="#preview"/></svg></button><button class="tb" aria-label="Publicar"><svg class="ic"><use href="#publish"/></svg></button><button class="tb" aria-label="DWF 3D"><svg class="ic"><use href="#globe"/></svg></button><i class="sep"></i>
      <button class="tb" aria-label="Cortar"><svg class="ic"><use href="#cut"/></svg></button><button class="tb" aria-label="Copiar"><svg class="ic"><use href="#copy"/></svg></button><button class="tb" aria-label="Pegar"><svg class="ic"><use href="#paste"/></svg></button><button class="tb" aria-label="Igualar propiedades"><svg class="ic"><use href="#match"/></svg></button><button class="tb" aria-label="Editor de bloques"><svg class="ic"><use href="#bedit"/></svg></button><i class="sep"></i>
      <button class="tb" aria-label="Deshacer"><svg class="ic"><use href="#undo"/></svg></button><button class="tdd" aria-label="Lista deshacer"><svg class="car"><use href="#caret"/></svg></button><button class="tb" aria-label="Rehacer"><svg class="ic"><use href="#redo"/></svg></button><button class="tdd dim" aria-label="Lista rehacer"><svg class="car"><use href="#caret"/></svg></button><i class="sep"></i>
      <button class="tb" aria-label="Encuadre"><svg class="ic"><use href="#pan"/></svg></button><button class="tb" aria-label="Zoom en tiempo real"><svg class="ic"><use href="#zoom"/></svg></button><button class="tb" aria-label="Zoom ventana"><svg class="ic"><use href="#zoomw"/></svg></button><button class="tb" aria-label="Zoom previo"><svg class="ic"><use href="#zoomp"/></svg></button><i class="sep"></i>
      <button class="tb" aria-label="Propiedades"><svg class="ic"><use href="#props"/></svg></button><button class="tb" aria-label="DesignCenter"><svg class="ic"><use href="#dcenter"/></svg></button><button class="tb" aria-label="Paletas"><svg class="ic"><use href="#palette"/></svg></button><button class="tb" aria-label="Conjuntos de planos"><svg class="ic"><use href="#sheet"/></svg></button><button class="tb" aria-label="Marcas"><svg class="ic"><use href="#markup"/></svg></button><button class="tb" aria-label="Calculadora"><svg class="ic"><use href="#calc"/></svg></button><i class="sep"></i>
      <button class="tb" aria-label="Ayuda"><svg class="ic"><use href="#help"/></svg></button>
    </div></div>
    <div class="bar"><span class="grip"></span><div class="tools">
      <button class="tb st" aria-label="Estilo de texto"><svg class="ic"><use href="#textstyle"/></svg></button><select class="sel w-style in" aria-label="Estilo de texto actual"><option>Standard</option></select><i class="sep"></i>
      <button class="tb st" aria-label="Estilo de cota"><svg class="ic"><use href="#dimstyle"/></svg></button><select class="sel w-style in" aria-label="Estilo de cota actual"><option>ISO-25</option></select><i class="sep"></i>
      <button class="tb st" aria-label="Estilo de tabla"><svg class="ic"><use href="#tblstyle"/></svg></button><select class="sel w-style" aria-label="Estilo de tabla actual"><option>Standard</option></select><i class="sep"></i>
      <button class="tb st" aria-label="Estilo de directriz"><svg class="ic"><use href="#ldrstyle"/></svg></button><select class="sel w-style in" aria-label="Estilo de directriz actual"><option>Standard</option></select>
    </div></div>
  </div>
  <div class="barrow">
    <div class="bar"><span class="grip edge"></span><div class="tools">
      <select class="sel w-ws" aria-label="Espacio de trabajo actual"><option>AutoCAD clásico</option></select><button class="tb" aria-label="Parámetros"><svg class="ic"><use href="#gear"/></svg></button><button class="tb" aria-label="Mi espacio"><svg class="ic"><use href="#wsave"/></svg></button>
    </div></div>
    <div class="bar"><span class="grip"></span><div class="tools">
      <button class="tb" aria-label="Capas"><svg class="ic"><use href="#layers"/></svg></button>
      <div class="combo"><select class="sel w-layer" aria-label="Capa actual"><option>0</option></select><span class="over"><svg class="ic"><use href="#bulb"/></svg><svg class="ic"><use href="#sun"/></svg><svg class="ic"><use href="#vpfreeze"/></svg><svg class="ic"><use href="#lock"/></svg><b class="sw"></b></span></div>
      <button class="tb" aria-label="Definir capa"><svg class="ic"><use href="#lay1"/></svg></button><button class="tb" aria-label="Capa previa"><svg class="ic"><use href="#lay2"/></svg></button><button class="tb" aria-label="Estados de capa"><svg class="ic"><use href="#layers"/></svg></button>
    </div></div>
    <div class="bar"><span class="grip"></span><div class="tools">
      <div class="combo"><select class="sel w-color" aria-label="Color"><option>PorCapa</option></select><span class="over"><b class="sw"></b></span></div><i class="sep"></i>
      <div class="combo"><select class="sel w-ltype" aria-label="Tipo de línea"><option>PorCapa</option></select><span class="over"><b class="ln"></b></span></div><i class="sep"></i>
      <div class="combo"><select class="sel w-lw" aria-label="Grosor de línea"><option>PorCapa</option></select><span class="over"><b class="ln short"></b></span></div><i class="sep"></i>
      <select class="sel w-plot" aria-label="Estilo de trazado" disabled><option>PorColor</option></select>
    </div></div>
  </div>
</div>

<main class="work">
  <div class="vbar left"><span class="vgrip"></span>
    <button aria-label="Línea"><svg class="ic"><use href="#line"/></svg></button><button aria-label="Línea auxiliar"><svg class="ic"><use href="#xline"/></svg></button><button aria-label="Polilínea"><svg class="ic"><use href="#pline"/></svg></button><button aria-label="Polígono"><svg class="ic"><use href="#polygon"/></svg></button><button aria-label="Rectángulo"><svg class="ic"><use href="#rect"/></svg></button><button aria-label="Arco"><svg class="ic"><use href="#arc"/></svg></button><button aria-label="Círculo"><svg class="ic"><use href="#circle"/></svg></button><button aria-label="Nube"><svg class="ic"><use href="#cloud"/></svg></button><button aria-label="Spline"><svg class="ic"><use href="#spline"/></svg></button><button aria-label="Elipse"><svg class="ic"><use href="#ellipse"/></svg></button><button aria-label="Arco elíptico"><svg class="ic"><use href="#earc"/></svg></button><button aria-label="Insertar bloque"><svg class="ic"><use href="#insert"/></svg></button><button aria-label="Crear bloque"><svg class="ic"><use href="#block"/></svg></button><button aria-label="Punto"><svg class="ic"><use href="#point"/></svg></button><button aria-label="Sombreado"><svg class="ic"><use href="#hatch"/></svg></button><button aria-label="Degradado"><svg class="ic"><use href="#gradient"/></svg></button><button aria-label="Región"><svg class="ic"><use href="#region"/></svg></button><button aria-label="Tabla"><svg class="ic"><use href="#table"/></svg></button><button aria-label="Texto múltiple"><svg class="ic"><use href="#mtext"/></svg></button><button aria-label="Añadir seleccionado"><svg class="ic"><use href="#addsel"/></svg></button>
  </div>

  <section class="frame">
    <div class="view">
      <svg class="canvas" role="img" aria-label="Área de dibujo">
        <defs><pattern id="grid" x="28" y="37" width="197" height="197" patternUnits="userSpaceOnUse">
          <rect width="197" height="197" fill="#212830"/>
          <g shape-rendering="crispEdges" fill="none">
          <path stroke="#262e3a" d="M10.500 0v197M20.500 0v197M30.500 0v197M39.500 0v197M59.500 0v197M69.500 0v197M79.500 0v197M89.500 0v197M108.500 0v197M118.500 0v197M128.500 0v197M138.500 0v197M158.500 0v197M168.500 0v197M177.500 0v197M187.500 0v197M0 10.500h197M0 20.500h197M0 30.500h197M0 39.500h197M0 59.500h197M0 69.500h197M0 79.500h197M0 89.500h197M0 108.500h197M0 118.500h197M0 128.500h197M0 138.500h197M0 158.500h197M0 168.500h197M0 177.500h197M0 187.500h197"/>
          <path stroke="#323a4a" d="M.5 0v197M49.500 0v197M99.500 0v197M148.500 0v197M0 .5h197M0 50.500h197M0 99.500h197M0 148.500h197"/>
          </g></pattern></defs>
        <rect width="100%" height="100%" fill="url(#grid)"/>
        <g stroke="#fff" fill="none" shape-rendering="crispEdges">
          <path d="M441.500 66.500L141.500 364.500M442.500 160L585.500 364M740.500 66L669.500 371"/>
          <path d="M627 30.500h69M661.500 0v65M658.500 27.500h6v6h-6z"/>
        </g>
      </svg>
      <p class="vlabel">[−][Superior][Estructura alámbrica 2D]</p>
      <svg class="ucs" width="80" height="72" viewBox="0 0 80 72"><path d="M4.500 66V18M4 66.500h51M.5 62.500h8v8h-8zM6.500 1l6 7v6M18.500 1l-6 7M59.500 53l13 13M72.500 53L59.500 66" stroke="#fff" fill="none" shape-rendering="crispEdges"/></svg>
      <div class="nav">
        <svg width="90" height="96" viewBox="0 -2 90 96">
          <circle cx="45" cy="45" r="37" fill="none" stroke="#454a54" stroke-width="8"/>
          <rect x="27.500" y="27.500" width="35" height="35" fill="#b4b6b8" stroke="#8c8f90"/><rect x="34" y="34" width="22" height="22" fill="#a2aaae"/>
          <g class="cube"><text x="45" y="12">N</text><text x="45" y="89">S</text><text x="6" y="50">O</text><text x="84" y="50">E</text><text class="face" x="45" y="48">SUPERIOR</text></g>
        </svg>
        <button class="scu">SCU <svg width="9" height="5" viewBox="0 0 9 5"><path d="M.5 .5h8l-4 4z" fill="none" stroke="#c8cad0"/></svg></button>
      </div>
    </div>
    <div class="vscroll"><button aria-label="Subir"><svg width="9" height="6" viewBox="0 0 9 6"><path d="M1 5l3.500-3.500L8 5" stroke="#444" stroke-width="2" fill="none"/></svg></button><i class="vthumb"></i><button class="dn" aria-label="Bajar"><svg width="9" height="6" viewBox="0 0 9 6"><path d="M1 1l3.500 3.500L8 1" stroke="#444" stroke-width="2" fill="none"/></svg></button></div>
    <div class="layouts">
      <button class="nv" aria-label="Primero"><svg width="9" height="9" viewBox="0 0 9 9"><path d="M1 0h1v9h-1zM8 0v9l-5-4.500z" fill="#555"/></svg></button><button class="nv" aria-label="Anterior"><svg width="9" height="9" viewBox="0 0 9 9"><path d="M7 0v9l-5-4.500z" fill="#555"/></svg></button><button class="nv" aria-label="Siguiente"><svg width="9" height="9" viewBox="0 0 9 9"><path d="M2 0v9l5-4.500z" fill="#555"/></svg></button><button class="nv" aria-label="Último"><svg width="9" height="9" viewBox="0 0 9 9"><path d="M7 0h1v9h-1zM1 0v9l5-4.500z" fill="#555"/></svg></button>
      <button class="lt on">Modelo</button><button class="lt">Presentación1</button><button class="lt">Presentación2</button>
      <div class="hscroll"><button aria-label="Izquierda"><svg width="6" height="9" viewBox="0 0 6 9"><path d="M5 1L1.500 4.500 5 8" stroke="#444" stroke-width="2" fill="none"/></svg></button><i class="hthumb"></i><button aria-label="Derecha"><svg width="6" height="9" viewBox="0 0 6 9"><path d="M1 1l3.500 3.500L1 8" stroke="#444" stroke-width="2" fill="none"/></svg></button></div>
    </div>
  </section>

  <div class="vbar dims"><span class="vgrip"></span>
    <button aria-label="Lineal"><svg class="ic"><use href="#dlin"/></svg></button><button aria-label="Alineada"><svg class="ic"><use href="#dali"/></svg></button><button aria-label="Longitud de arco"><svg class="ic"><use href="#darc"/></svg></button><button aria-label="Coordenada"><svg class="ic"><use href="#dord"/></svg></button><i class="hsep"></i>
    <button aria-label="Radio"><svg class="ic"><use href="#drad"/></svg></button><button aria-label="Con recodo"><svg class="ic"><use href="#djog"/></svg></button><button aria-label="Diámetro"><svg class="ic"><use href="#ddia"/></svg></button><button aria-label="Angular"><svg class="ic"><use href="#dang"/></svg></button><i class="hsep"></i>
    <button aria-label="Cota rápida"><svg class="ic"><use href="#dquick"/></svg></button><button aria-label="Línea base"><svg class="ic"><use href="#dbase"/></svg></button><button aria-label="Continua"><svg class="ic"><use href="#dcont"/></svg></button><button aria-label="Espacio de cotas"><svg class="ic"><use href="#dspace"/></svg></button><button aria-label="Corte de cota"><svg class="ic"><use href="#dbreak"/></svg></button><i class="hsep"></i>
    <button aria-label="Tolerancia"><svg class="ic"><use href="#tol"/></svg></button><button aria-label="Marca de centro"><svg class="ic"><use href="#cmark"/></svg></button><button aria-label="Inspección"><svg class="ic"><use href="#inspect"/></svg></button><button aria-label="Línea con recodo"><svg class="ic"><use href="#jogl"/></svg></button><i class="hsep"></i>
    <button aria-label="Editar cota"><svg class="ic"><use href="#dedit"/></svg></button><button aria-label="Editar texto de cota"><svg class="ic"><use href="#dtedit"/></svg></button><button aria-label="Actualizar"><svg class="ic"><use href="#dupd"/></svg></button><i class="hsep"></i>
    <button aria-label="Estilo de cota"><svg class="ic"><use href="#dimstyle"/></svg></button>
  </div>
  <div class="vbar mods"><span class="vgrip"></span>
    <button aria-label="Borrar"><svg class="ic"><use href="#erase"/></svg></button><button aria-label="Copiar objeto"><svg class="ic"><use href="#cpy"/></svg></button><button aria-label="Simetría"><svg class="ic"><use href="#mirror"/></svg></button><button aria-label="Desfase"><svg class="ic"><use href="#offset"/></svg></button><button aria-label="Matriz"><svg class="ic"><use href="#array"/></svg></button><button aria-label="Desplazar"><svg class="ic"><use href="#move"/></svg></button><button aria-label="Girar"><svg class="ic"><use href="#rotate"/></svg></button><button aria-label="Escala"><svg class="ic"><use href="#scale"/></svg></button><button aria-label="Estirar"><svg class="ic"><use href="#stretch"/></svg></button><button aria-label="Recortar"><svg class="ic"><use href="#trim"/></svg></button><button aria-label="Alargar"><svg class="ic"><use href="#extend"/></svg></button><button aria-label="Partir en un punto"><svg class="ic"><use href="#brkpt"/></svg></button><button aria-label="Partir"><svg class="ic"><use href="#brk"/></svg></button><button aria-label="Juntar"><svg class="ic"><use href="#join"/></svg></button><button aria-label="Chaflán"><svg class="ic"><use href="#chamfer"/></svg></button><button aria-label="Empalme"><svg class="ic"><use href="#fillet"/></svg></button><button aria-label="Fusionar curvas"><svg class="ic"><use href="#blend"/></svg></button><button aria-label="Descomponer"><svg class="ic"><use href="#explode"/></svg></button>
    <span class="vgrip second"></span>
    <button aria-label="Traer al frente"><svg class="ic"><use href="#front1"/></svg></button><button aria-label="Enviar al fondo"><svg class="ic"><use href="#front2"/></svg></button><button aria-label="Encima de objetos"><svg class="ic"><use href="#front3"/></svg></button><button aria-label="Debajo de objetos"><svg class="ic"><use href="#front4"/></svg></button><i class="hsep"></i>
  </div>
</main>

<section class="cmd">
  <div class="cside"><span class="cgrip"></span>
    <button aria-label="Cerrar línea de comandos"><svg width="10" height="10" viewBox="0 0 10 10"><path d="M1 1l8 8M9 1L1 9" stroke="#eee" stroke-width="2"/></svg></button>
    <button aria-label="Personalizar línea de comandos"><svg width="14" height="14" viewBox="0 0 14 14"><path d="M6 6l6 6" stroke="#ddd" stroke-width="3"/><path d="M7 3.500a3 3 0 1 1-5.500-1L4 5l1.500-1.500L3.500 1A3 3 0 0 1 7 3.500z" fill="#ddd" stroke="#ddd"/></svg></button>
  </div>
  <div class="cmain">
    <pre class="hist">Precise punto siguiente o [desHacer]:
Precise punto siguiente o [desHacer]: *Cancelado*</pre>
    <div class="cin"><button class="prompt" aria-label="Comandos recientes"><svg width="15" height="14" viewBox="0 0 15 14"><path d="M.5 .5h14v13h-14z" fill="#dfe3ea" stroke="#9aa0aa"/><path d="M3 4l3 3-3 3M8 10.500h4" stroke="#445" fill="none"/></svg><svg class="car"><use href="#caret"/></svg></button><input type="text" placeholder="Escriba un comando" aria-label="Comando"></div>
  </div>
</section>

<footer class="status">
  <output class="coords">3712.3915, 2534.7359, 0.0000</output>
  <button aria-label="Inferir"><svg class="ic"><use href="#s-infer"/></svg></button><button aria-label="Forzar cursor"><svg class="ic"><use href="#s-snap"/></svg></button><button class="on" aria-label="Rejilla"><svg class="ic"><use href="#s-grid"/></svg></button><button aria-label="Orto"><svg class="ic"><use href="#s-ortho"/></svg></button><button aria-label="Polar"><svg class="ic"><use href="#s-polar"/></svg></button><button class="on" aria-label="Referencia"><svg class="ic"><use href="#s-osnap"/></svg></button><button class="on" aria-label="Referencia 3D"><svg class="ic"><use href="#s-3d"/></svg></button><button class="on" aria-label="Rastreo"><svg class="ic"><use href="#s-track"/></svg></button><button class="on" aria-label="SCP dinámico"><svg class="ic"><use href="#s-ducs"/></svg></button><button class="on" aria-label="Entrada dinámica"><svg class="ic"><use href="#s-dyn"/></svg></button><button aria-label="Grosor"><svg class="ic"><use href="#s-lwt"/></svg></button><button class="on" aria-label="Transparencia"><svg class="ic"><use href="#s-tpy"/></svg></button><button aria-label="Propiedades rápidas"><svg class="ic"><use href="#s-qp"/></svg></button><button class="on" aria-label="Ciclo de selección"><svg class="ic"><use href="#s-sc"/></svg></button><button aria-label="Monitor"><svg class="ic"><use href="#s-am"/></svg></button>
  <span class="space"></span>
  <button class="model">MODELO</button><button aria-label="Presentación"><svg class="ic"><use href="#s-layout"/></svg></button><button aria-label="Vistas rápidas"><svg class="ic"><use href="#s-views"/></svg></button><i class="gap"></i>
  <button class="scale"><svg class="ic"><use href="#s-anno"/></svg>1:1<svg class="car"><use href="#caret"/></svg></button><button aria-label="Visibilidad de anotación"><svg class="ic"><use href="#s-anno"/><circle cx="12.500" cy="10" r="3" fill="#ffe070" stroke="#e07a10"/></svg></button><button aria-label="Escala automática"><svg class="ic off"><use href="#s-anno"/></svg></button><i class="gap thin"></i>
  <button aria-label="Cambio de espacio"><svg class="ic"><use href="#gear"/><path d="M16 12v4h-4z" fill="#000" stroke="none"/></svg></button><button aria-label="Bloquear"><svg class="ic"><path d="M9.500 6V3.500q0-2.500 2.500-2.500t2.500 2.500V6" stroke-width="2"/><path d="M.5 6.500h10v8h-10z" fill="#e8e8e8"/><path d="M5.500 9v3" stroke-width="2"/></svg></button><button aria-label="Hardware"><svg class="ic"><circle cx="8" cy="8" r="6.500" fill="#85898f" stroke="#70747a"/><path d="M4 3l3 5 3-1" stroke="#eee" stroke-width="2"/></svg></button><button class="iso" aria-label="Aislar objetos"><svg class="ic"><use href="#bulb"/></svg></button><button class="arr" aria-label="Menú de barra"><svg class="car"><use href="#caret"/></svg></button><button aria-label="Pantalla limpia"><svg class="ic"><use href="#s-win"/></svg></button>
</footer>
<div class="task"></div>
</body>
</html>
```
FILE: styles.css
```css
* { box-sizing: border-box; }
body { margin: 0; min-height: 100vh; display: flex; flex-direction: column; background: #686868; color: #000; font: 12px/16px "Open Sans", "Noto Sans", sans-serif; overflow: hidden; }
button { border: 0; padding: 0; margin: 0; background: none; font: inherit; color: inherit; display: flex; align-items: center; justify-content: center; flex: none; }
i, b { flex: none; }
.sprite { position: absolute; width: 0; height: 0; }
.ic { width: 16px; height: 16px; fill: none; stroke: #3a4250; flex: none; display: block; }
.car { width: 7px; height: 4px; flex: none; }

.head { display: grid; grid-template-columns: 38px 1fr; grid-template-rows: 24px 20px; }
.appbtn { grid-area: 1 / 1 / 3 / 2; z-index: 1; height: 40px; gap: 2px; background: linear-gradient(#c8c8c8, #8e8e8e); border-right: 1px solid #222; border-bottom: 1px solid #111; color: #333b4a; }
.title { grid-area: 1 / 2; display: flex; background: #ececec; border-bottom: 1px solid #3c3c3c; min-width: 0; }
.qat { display: flex; padding-left: 5px; background: linear-gradient(#a8a8a8, #7e7e7e); color: #444; }
.q { width: 24px; height: 22px; }
.dd { width: 12px; height: 22px; }
.dd .car { width: 5px; height: 3px; }
.combo { display: grid; }
.combo > * { grid-area: 1 / 1; }
.over { pointer-events: none; display: flex; align-items: center; justify-self: start; padding-left: 4px; }
.qsel { height: 22px; color: #000; }
.qsel .sel { width: 180px; padding-left: 21px; height: 22px; border: 1px solid #555; background-color: #c4c4c4; }
.qsel .over { padding-left: 4px; }
.more { width: 16px; border-right: 1px solid #555; }
.doc { flex: 1; margin: 0; padding-left: 14px; font: 15px/24px "Open Sans", sans-serif; text-align: center; color: #222; }
.info { display: flex; background: linear-gradient(#a8a8a8, #7e7e7e); border-left: 1px solid #555; border-right: 1px solid #555; color: #444; }
.srch { width: 12px; height: 22px; }
.find { width: 180px; height: 22px; margin-right: 1px; border: 1px solid #555; border-top: 0; padding: 4px 2px 0; background: #fafafa; font: italic 11px/16px "Open Sans", sans-serif; }
.find::placeholder { color: #777; opacity: 1; }
.login { gap: 4px; width: 118px; justify-content: flex-start; padding-left: 4px; color: #f4f4f4; height: 22px; }
.login .car { width: 5px; height: 3px; margin-left: auto; margin-right: 5px; color: #444; }
.dd.sm { width: 10px; }
.hlp { margin-left: 9px; width: 30px; border-left: 1px solid #999; }
.win { display: flex; width: 123px; padding-left: 22px; }
.win button { width: 26px; height: 18px; }
.win .close { width: 45px; background: #bcbcbc; }
.menu { grid-area: 2 / 1 / 3 / 3; display: flex; align-items: center; gap: 22px; padding: 0 5px 0 52px; background: linear-gradient(#9c9c9c, #555); color: #f2f2f2; }
.child { margin-left: auto; display: flex; gap: 6px; }

.filetabs { display: flex; align-items: flex-end; height: 27px; padding-left: 10px; background: linear-gradient(#a0a0a0, #919191); border-bottom: 1px solid #b4b4b4; }
.ftab { display: grid; width: 136px; height: 23px; }
.ftab > * { grid-area: 1 / 1; }
.shape { width: 100%; height: 100%; }
.fcont { display: flex; justify-content: space-between; padding: 0 17px 0 19px; align-items: center; }
.plus { height: 20px; margin-left: 2px; align-self: center; }

.bars { display: flex; flex-direction: column; gap: 3px; padding: 4px 0 4px; }
.barrow { display: flex; gap: 1px; height: 24px; }
.bar { display: flex; border: 1px solid #333; border-left: 0; background: #ececec; }
.grip { width: 8px; background: #555 repeating-linear-gradient(#222 0 1px, #888 1px 2px) content-box; padding: 4px 2px; }
.grip.edge { width: 5px; padding-left: 0; }
.tools { display: flex; align-items: center; }
.tb { width: 23px; height: 22px; }
.tb.st { width: 24px; }
.tdd { width: 13px; height: 22px; color: #444; }
.tdd .car { width: 5px; height: 3px; }
.dim { color: #999; }
.sep { width: 6px; height: 18px; background: linear-gradient(#888, #888) no-repeat center / 1px 100%; }
.sel { appearance: none; height: 22px; border: 1px solid #aaa; border-top-color: #f4f4f4; border-radius: 0; font: 12px/16px "Open Sans", "Noto Sans", sans-serif; color: #000; padding: 0 18px 0 5px; opacity: 1; background: #eaeaea url("data:image/svg+xml,%3Csvg xmlns='http://www.w3.org/2000/svg' width='8' height='6'%3E%3Cpath d='M1 1l3 3 3-3' stroke='%23555' stroke-width='2' fill='none'/%3E%3C/svg%3E") no-repeat right 3px center; }
.sel.tri { background-image: url("data:image/svg+xml,%3Csvg xmlns='http://www.w3.org/2000/svg' width='8' height='4'%3E%3Cpath d='M0 0h7l-3.500 4z' fill='%23444'/%3E%3C/svg%3E"); }
.sel:disabled { color: #777; background-color: #eee; background-image: url("data:image/svg+xml,%3Csvg xmlns='http://www.w3.org/2000/svg' width='8' height='6'%3E%3Cpath d='M1 1l3 3 3-3' stroke='%23bbb' stroke-width='2' fill='none'/%3E%3C/svg%3E"); }
.w-style { width: 119px; }
.sel.in { padding-left: 18px; }
.w-ws { width: 175px; padding-left: 9px; }
.w-layer { width: 301px; padding-left: 86px; }
.w-color { width: 151px; padding-left: 19px; }
.w-ltype { width: 161px; padding-left: 70px; }
.w-lw { width: 125px; padding-left: 44px; }
.w-plot { width: 118px; padding-left: 9px; }
.sw { width: 10px; height: 10px; background: #fff; border: 1px solid #000; }
.w-layer + .over .sw { margin-left: 2px; }
.ln { width: 60px; height: 1px; background: #000; }
.ln.short { width: 36px; }

.work { flex: 1; display: flex; align-items: flex-start; min-height: 512px; }
.vbar { display: flex; flex-direction: column; background: #ececec; border: 1px solid #333; flex: none; }
.vbar button { width: 18px; height: 22px; }
.vgrip { height: 7px; background: #555 repeating-linear-gradient(90deg, #222 0 1px, #999 1px 2px) content-box; padding: 2px 4px; }
.left { width: 22px; margin: 2px 4px 0 0; border-left: 0; border-top: 0; }
.dims { width: 24px; margin: 7px 4px 0 4px; }
.mods { width: 24px; margin: 1px 4px 0 0; align-self: stretch; border-bottom: 0; }
.dims button, .mods button { width: 22px; }
.second { height: 10px; border-top: 3px solid #444; }
.hsep { height: 6px; margin: 0 2px; background: linear-gradient(#999, #999) no-repeat center / 100% 1px; }
.frame { flex: 1; align-self: stretch; min-width: 0; display: grid; grid-template-columns: minmax(0, 1fr) 17px; grid-template-rows: minmax(0, 1fr) 16px; border: 2px solid #a0a29b; border-right-color: #fff; border-bottom: 1px solid #fff; background: #f0f0f0; }
.view { position: relative; overflow: hidden; }
.canvas { display: block; width: 100%; height: 100%; }
.vlabel { position: absolute; left: 4px; top: 6px; margin: 0; color: #f0f0f0; font-size: 11px; }
.ucs { position: absolute; left: 9px; bottom: 9px; }
.nav { position: absolute; right: 13px; top: 10px; display: flex; flex-direction: column; align-items: center; gap: 12px; }
.cube text { font: bold 14px "Open Sans", sans-serif; fill: #b8babd; text-anchor: middle; }
.cube .face { font: bold 7px Roboto, sans-serif; fill: #4c545e; }
.scu { width: 46px; height: 17px; gap: 5px; border: 1px solid #b0b2ba; border-radius: 4px; background: #9a9ca8; color: #666a76; font: 11px/15px "Liberation Sans", sans-serif; }
.vscroll { display: flex; flex-direction: column; border-right: 1px solid #d8d8d8; }
.vscroll button { height: 17px; }
.vthumb { height: 17px; width: 15px; margin-left: 1px; background: #cdcdcd; }
.vscroll .dn { margin-top: auto; }
.layouts { grid-column: 1 / 3; display: flex; background: #f0f0f0; }
.nv { width: 15px; border: 1px solid #bbb; border-width: 0 1px 1px 0; }
.lt { position: relative; padding: 0 12px 0 8px; font: 11px/16px "Liberation Sans", sans-serif; background: #fff; border-bottom: 1px solid #888; }
.lt::after { content: ""; position: absolute; top: 0; right: 0; width: 7px; height: 100%; background: linear-gradient(to bottom right, #fff 44%, #444 47%, #444 53%, #fff 56%); }
.lt:last-of-type::after { background: linear-gradient(to bottom right, #fff 44%, #444 47%, #444 53%, #f0f0f0 56%); }
.lt.on { background: #212830; color: #fff; padding: 0 13px 0 12px; clip-path: polygon(0 0, 100% 0, 100% 100%, 7px 100%); border-color: #212830; }
.lt.on::after { background: linear-gradient(to bottom right, #212830 50%, #fff 54%); }
.hscroll { margin-left: auto; width: 445px; display: flex; align-items: center; border-left: 1px solid #ddd; padding: 0 18px 0 4px; }
.hscroll button { width: 17px; height: 16px; }
.hthumb { width: 17px; height: 14px; margin-left: auto; background: #cdcdcd; }

.cmd { display: flex; width: 83%; max-width: 1129px; height: 57px; margin: 5px 0 1px; }
.cside { width: 20px; display: flex; flex-direction: column; align-items: center; background: linear-gradient(#808080, #303030); gap: 7px; padding-right: 3px; }
.cside button { height: 14px; width: 18px; }
.cgrip { height: 6px; width: 18px; margin-top: 3px; background: radial-gradient(#aaa 40%, transparent 60%) 0 0 / 3px 3px; }
.cmain { flex: 1; display: flex; flex-direction: column; background: #fff; border: 1px solid #777; border-left: 0; }
.hist { margin: 0; padding: 2px 2px; height: 34px; background: #c8c8c8; border-bottom: 1px solid #666; font: 12px/15px "DejaVu Sans Mono", monospace; color: #111; }
.cin { flex: 1; display: flex; align-items: center; padding-left: 5px; }
.prompt { gap: 3px; color: #888; }
.prompt .car { width: 6px; height: 3px; }
.cin input { flex: 1; border: 0; outline: 0; padding: 0 7px; background: none; font: italic 12px/16px "DejaVu Sans Mono", monospace; }
.cin input::placeholder { color: #999; opacity: 1; }

.status { display: flex; height: 22px; border-top: 1px solid #000; background: linear-gradient(#9a9a9a, #777); }
.status button { width: 22px; border-right: 1px solid #444; background: linear-gradient(#c2c2c2, #9a9a9a); }
.status .on { background: linear-gradient(#eaf7fb, #c3e3ee 50%, #8cc4d8 51%, #b4dde8); }
.coords { width: 194px; padding-left: 9px; border-right: 1px solid #333; background: linear-gradient(#a0a0a0, #7c7c7c); font: 11px/21px "Liberation Sans", sans-serif; }
.space { flex: 1; border-right: 1px solid #444; }
.gap { width: 12px; border-right: 1px solid #444; background: #777; }
.gap.thin { width: 6px; }
.status .model { width: 53px; font: 11px/20px "Liberation Sans", sans-serif; }
.status .scale { width: 51px; gap: 2px; }
.off { opacity: 0.5; }
.status .iso { width: 31px; border: 2px solid #555; border-right-color: #bbb; border-bottom-color: #bbb; background: #999; }
.status .arr { width: 12px; }
.arr .car { width: 6px; }
.task { height: 2px; background: linear-gradient(90deg, #b07a2c, #e0a850 8%, #c8903c 30%, #f0d070 34%, #c8903c 38%, #e0a850 58%, #a88838 60%, #c0a060 85%, #d8a828); }
```
